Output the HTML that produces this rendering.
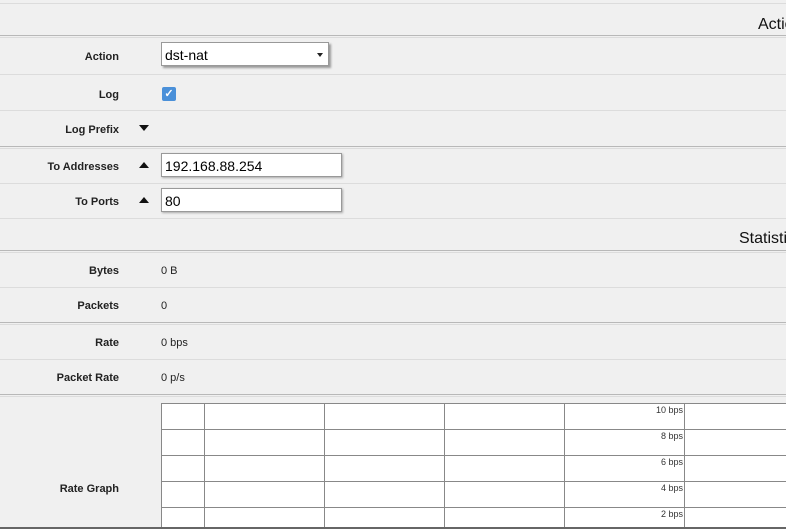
<!DOCTYPE html>
<html><head><style>
body{margin:0;width:786px;height:529px;overflow:hidden;background:#f0f0f0;font-family:"Liberation Sans",sans-serif;position:relative}
.h{position:absolute;left:0;width:786px;height:1px;background:#dcdcdc}
.s{position:absolute;left:0;width:786px;height:1px;background:#b8b8b8}
.l{position:absolute;right:667px;font-size:11px;font-weight:bold;color:#222;white-space:nowrap;margin-top:1px}
.v{position:absolute;left:161px;font-size:11px;color:#222;margin-top:1px}
.t{position:absolute;font-size:16px;color:#111;white-space:nowrap}
.in{position:absolute;left:161px;height:24px;background:#fff;border:1px solid #999;box-shadow:1px 1px 2px #aaa;font-size:14px;line-height:24px;padding-left:3px;box-sizing:border-box;width:181px}
.up,.dn{position:absolute;left:139px;width:0;height:0;border-left:5px solid transparent;border-right:5px solid transparent}
.up{border-bottom:6px solid #111}.dn{border-top:6px solid #111}
.gh{position:absolute;left:161px;width:625px;height:1px;background:#888}
.gv{position:absolute;top:403px;width:1px;height:126px;background:#888}
.gl{position:absolute;right:103px;font-size:9px;color:#333}
</style></head><body>
<div class="h" style="top:3px"></div>
<div class="t" style="left:758px;top:16px">Action</div>
<div class="s" style="top:35px"></div><div class="h" style="top:37px"></div>
<div class="l" style="top:50px">Action</div>
<div class="in" style="top:42px;width:168px;box-shadow:2px 2px 2px #999">dst-nat<span style="position:absolute;right:5px;top:10px;border-left:3px solid transparent;border-right:3px solid transparent;border-top:4px solid #222"></span></div>
<div class="h" style="top:74px"></div>
<div class="l" style="top:88px">Log</div>
<div style="position:absolute;left:162px;top:87px;width:14px;height:14px;border-radius:2px;background:#4a90d9;color:#fff;font-size:11px;line-height:14px;text-align:center;font-weight:bold">✓</div>
<div class="h" style="top:110px"></div>
<div class="l" style="top:123px">Log Prefix</div>
<div class="dn" style="top:125px"></div>
<div class="s" style="top:146px"></div><div class="h" style="top:148px"></div>
<div class="l" style="top:160px">To Addresses</div>
<div class="up" style="top:162px"></div>
<div class="in" style="top:153px">192.168.88.254</div>
<div class="h" style="top:183px"></div>
<div class="l" style="top:195px">To Ports</div>
<div class="up" style="top:197px"></div>
<div class="in" style="top:188px">80</div>
<div class="h" style="top:218px"></div>
<div class="t" style="left:739px;top:230px">Statistics</div>
<div class="s" style="top:250px"></div><div class="h" style="top:252px"></div>
<div class="l" style="top:264px">Bytes</div><div class="v" style="top:264px">0 B</div>
<div class="h" style="top:287px"></div>
<div class="l" style="top:299px">Packets</div><div class="v" style="top:299px">0</div>
<div class="s" style="top:322px"></div><div class="h" style="top:324px"></div>
<div class="l" style="top:336px">Rate</div><div class="v" style="top:336px">0 bps</div>
<div class="h" style="top:359px"></div>
<div class="l" style="top:371px">Packet Rate</div><div class="v" style="top:371px">0 p/s</div>
<div class="s" style="top:394px"></div><div class="h" style="top:396px"></div>
<div class="l" style="top:482px">Rate Graph</div>
<div style="position:absolute;left:161px;top:403px;width:625px;height:126px;background:#fff"></div>
<div class="gh" style="top:403px"></div><div class="gh" style="top:429px"></div><div class="gh" style="top:455px"></div><div class="gh" style="top:481px"></div><div class="gh" style="top:507px"></div>
<div class="gv" style="left:161px"></div><div class="gv" style="left:204px"></div><div class="gv" style="left:324px"></div><div class="gv" style="left:444px"></div><div class="gv" style="left:564px"></div><div class="gv" style="left:684px"></div>
<div class="gl" style="top:405px">10 bps</div><div class="gl" style="top:431px">8 bps</div><div class="gl" style="top:457px">6 bps</div><div class="gl" style="top:483px">4 bps</div><div class="gl" style="top:509px">2 bps</div>
<div style="position:absolute;left:0;top:527px;width:786px;height:2px;background:#666"></div>
</body></html>
